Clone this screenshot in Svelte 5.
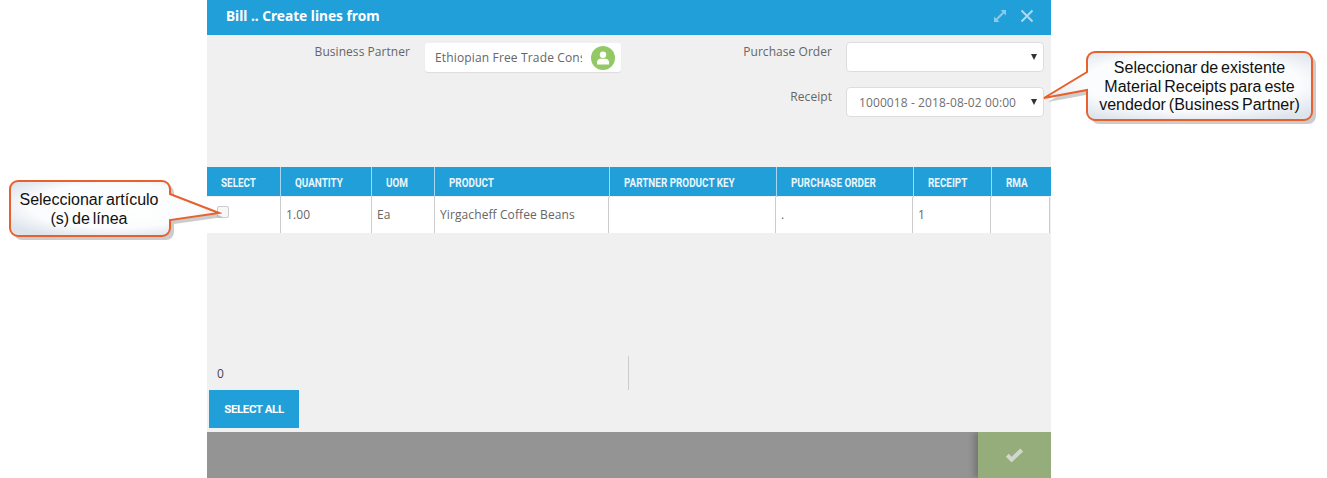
<script>
  const headers = [
    { label: 'SELECT' },
    { label: 'QUANTITY' },
    { label: 'UOM' },
    { label: 'PRODUCT' },
    { label: 'PARTNER PRODUCT KEY' },
    { label: 'PURCHASE ORDER' },
    { label: 'RECEIPT' },
    { label: 'RMA' }
  ];
  const row = ['1.00', 'Ea', 'Yirgacheff Coffee Beans', '', '.', '1', ''];
</script>

<div class="page">
  <div class="modal">
    <header class="title">
      <span class="title-text">Bill .. Create lines from</span>
      <span class="title-icons">
        <svg width="14" height="14" viewBox="0 0 14 14">
          <path d="M7.500 1H13v5.500zM1 7.500V13h5.500z" fill="#8ccaea"/>
          <path d="M3.500 10.500l7-7" stroke="#8ccaea" stroke-width="2" fill="none"/>
        </svg>
        <svg width="14" height="14" viewBox="0 0 14 14">
          <path d="M1.500 1.500l11 11M12.500 1.500l-11 11" stroke="#aed9f0" stroke-width="2" fill="none"/>
        </svg>
      </span>
    </header>

    <section class="form">
      <div class="form-left">
        <span class="label partner-label">Business Partner</span>
        <div class="partner">
          <span class="partner-text">Ethiopian Free Trade Consortium</span>
          <span class="partner-icon">
            <svg width="14" height="14" viewBox="0 0 14 14">
              <circle cx="7" cy="3.800" r="3.200" fill="#fff"/>
              <path d="M1 13.500v-2.500c0-2 1.600-3.300 3.500-3.300h5c1.900 0 3.500 1.300 3.500 3.300v2.500z" fill="#fff"/>
            </svg>
          </span>
        </div>
      </div>
      <div class="form-right">
        <span class="label">Purchase Order</span>
        <div class="select"><span></span><i class="caret"></i></div>
        <span class="label">Receipt</span>
        <div class="select"><span>1000018 - 2018-08-02 00:00</span><i class="caret"></i></div>
      </div>
    </section>

    <div class="thead">
      {#each headers as h}
        <div class="th"><span class="th-label">{h.label}</span></div>
      {/each}
    </div>
    <div class="tbody">
      <div class="td"><span class="check"></span></div>
      {#each row as cell}
        <div class="td">{cell}</div>
      {/each}
    </div>

    <div class="spacer"></div>

    <div class="status">
      <span class="count">0</span>
      <span class="divider"></span>
    </div>
    <button class="select-all">SELECT ALL</button>

    <footer class="footer">
      <div class="ok">
        <svg width="19" height="15" viewBox="2 0 16 13">
          <path d="M2.500 7.500l5 5 10-9.500-2.500-2.500-7.500 7-2.500-2.500z" fill="#d2d6ce"/>
        </svg>
      </div>
    </footer>
  </div>

  <div class="callout callout-left">
    <svg class="bubble" width="215" height="68" viewBox="0 0 215 68">
      <defs>
        <radialGradient id="fillLeft" cx="0.5" cy="0.45" r="0.62">
          <stop offset="0" stop-color="#ffffff"/>
          <stop offset="0.65" stop-color="#fbfcfd"/>
          <stop offset="1" stop-color="#dde4ec"/>
        </radialGradient>
      </defs>
      <path d="M11 2h144a8 8 0 0 1 8 8v5l49 19-49 7v8a8 8 0 0 1-8 8H11a8 8 0 0 1-8-8V10a8 8 0 0 1 8-8z" transform="translate(4 4)" fill="#9a9a9a" opacity="0.5"/>
      <path d="M11 2h144a8 8 0 0 1 8 8v5l49 19-49 7v8a8 8 0 0 1-8 8H11a8 8 0 0 1-8-8V10a8 8 0 0 1 8-8z" fill="url(#fillLeft)" stroke="#e8602c" stroke-width="2"/>
    </svg>
    <p class="callout-text left-text">Seleccionar artículo<br />(s) de línea</p>
  </div>

  <div class="callout callout-right">
    <svg class="bubble" width="280" height="80" viewBox="0 0 280 80">
      <defs>
        <radialGradient id="fillRight" cx="0.55" cy="0.45" r="0.62">
          <stop offset="0" stop-color="#ffffff"/>
          <stop offset="0.65" stop-color="#fbfcfd"/>
          <stop offset="1" stop-color="#dde4ec"/>
        </radialGradient>
      </defs>
      <path d="M54 2h209a8 8 0 0 1 8 8v52a8 8 0 0 1-8 8H54a8 8 0 0 1-8-8V40l-43 8 43-26V10a8 8 0 0 1 8-8z" transform="translate(4 4)" fill="#9a9a9a" opacity="0.5"/>
      <path d="M54 2h209a8 8 0 0 1 8 8v52a8 8 0 0 1-8 8H54a8 8 0 0 1-8-8V40l-43 8 43-26V10a8 8 0 0 1 8-8z" fill="url(#fillRight)" stroke="#e8602c" stroke-width="2"/>
    </svg>
    <p class="callout-text right-text">Seleccionar de existente<br />Material Receipts para este<br />vendedor (Business Partner)</p>
  </div>
</div>

<style>
  :global(body) {
    margin: 0;
    background: #fff;
  }

  .page {
    position: relative;
    width: 1327px;
    height: 478px;
    overflow: hidden;
    font-family: "Open Sans", sans-serif;
  }

  .modal {
    margin-left: 207px;
    width: 844px;
    height: 478px;
    display: flex;
    flex-direction: column;
    background: #f0f0f0;
  }

  .title {
    flex: none;
    height: 35px;
    padding: 0 17px 0 19px;
    display: flex;
    align-items: center;
    justify-content: space-between;
    background: #219fd9;
    color: #fff;
  }

  .title-text {
    font-family: "Noto Sans", sans-serif;
    font-size: 13.700px;
    font-weight: 700;
    margin-top: -4px;
  }

  .title-icons {
    display: flex;
    gap: 13px;
    align-items: center;
    margin-top: -3px;
  }

  .form {
    flex: none;
    height: 132px;
    display: flex;
  }

  .form-left {
    width: 414px;
    padding-top: 8px;
    display: flex;
    justify-content: flex-end;
    gap: 15px;
    box-sizing: border-box;
  }

  .label {
    font-size: 12px;
    letter-spacing: 0.05px;
    color: #666;
    line-height: 16px;
    text-align: right;
    margin-top: 1px;
  }

  .form-right .label {
    margin-top: 1px;
    padding-top: 1px;
  }

  .partner {
    width: 196px;
    height: 29px;
    box-sizing: border-box;
    display: flex;
    align-items: center;
    justify-content: space-between;
    padding: 0 6px 0 10px;
    background: #fff;
    border-radius: 3px;
    box-shadow: 0 1px 1px #ddd;
  }

  .partner-text {
    width: 147px;
    overflow: hidden;
    white-space: nowrap;
    font-size: 12px;
    letter-spacing: 0.15px;
    color: #666;
  }

  .partner-icon {
    width: 24px;
    height: 24px;
    border-radius: 50%;
    background: #92c964;
    display: flex;
    align-items: center;
    justify-content: center;
  }

  .form-right {
    margin-left: 110px;
    padding-top: 7px;
    display: grid;
    grid-template-columns: 101px 198px;
    grid-auto-rows: 30px;
    row-gap: 15px;
    column-gap: 14px;
    align-content: start;
  }

  .select {
    box-sizing: border-box;
    height: 30px;
    display: flex;
    align-items: center;
    justify-content: space-between;
    padding: 0 6px 0 12px;
    background: #fff;
    border: 1px solid #ddd;
    border-radius: 4px;
    font-size: 12px;
    letter-spacing: 0.1px;
    color: #707070;
  }

  .caret {
    width: 0;
    height: 0;
    border-left: 3px solid transparent;
    border-right: 3px solid transparent;
    border-top: 6px solid #333;
  }

  .thead {
    flex: none;
    height: 29px;
    display: grid;
    grid-template-columns: 74px 91px 63px 175px 167px 137px 78px 59px;
    background: #219fd9;
  }

  .th {
    box-sizing: border-box;
    padding-left: 14px;
    border-right: 1px solid #a8d7ef;
    font-family: Roboto, sans-serif;
    font-size: 12.500px;
    font-weight: 700;
    line-height: 31px;
    color: #e9f5fb;
    white-space: nowrap;
  }

  .th:last-child {
    border-right: none;
  }

  /* the original face is condensed, none is installed */
  .th-label {
    display: inline-block;
    transform: scaleX(0.79);
    transform-origin: left center;
  }

  .tbody {
    flex: none;
    margin-top: 1px;
    height: 36px;
    width: 843px;
    display: grid;
    grid-template-columns: 74px 91px 63px 174px 167px 137px 78px 59px;
    background: #fff;
  }

  .td {
    box-sizing: border-box;
    padding-left: 5px;
    border-right: 1px solid #ccc;
    font-size: 12px;
    letter-spacing: 0.1px;
    line-height: 36px;
    color: #666;
  }

  .check {
    display: block;
    width: 12px;
    height: 12px;
    margin: 9px 0 0 5px;
    box-sizing: border-box;
    border: 1px solid #ccc;
    border-radius: 2px;
    background: #f7f7f7;
  }

  .spacer {
    flex: 1;
  }

  .status {
    flex: none;
    height: 34px;
    display: flex;
    align-items: center;
  }

  .count {
    width: 421px;
    padding-left: 10px;
    box-sizing: border-box;
    font-size: 12px;
    color: #444;
    margin-top: 1px;
  }

  .divider {
    width: 1px;
    height: 34px;
    background: #ccc;
  }

  .select-all {
    flex: none;
    width: 90px;
    height: 38px;
    margin: 0 0 4px 2px;
    padding: 0;
    border: none;
    background: #219fd9;
    color: #fff;
    font-family: Roboto, sans-serif;
    font-size: 11.500px;
    font-weight: 700;
    letter-spacing: -0.4px;
  }

  .footer {
    flex: none;
    height: 46px;
    display: flex;
    justify-content: flex-end;
    overflow: hidden;
    background: #949494;
  }

  .ok {
    width: 73px;
    display: flex;
    align-items: center;
    justify-content: center;
    background: #94ad7b;
    box-shadow: -4px 0 6px rgba(60, 60, 60, 0.35);
  }

  .callout {
    position: absolute;
  }

  .bubble {
    display: block;
  }

  .callout-left {
    left: 7px;
    top: 179px;
    width: 215px;
    height: 68px;
  }

  .callout-right {
    left: 1041px;
    top: 50px;
    width: 280px;
    height: 80px;
  }

  .callout-text {
    position: absolute;
    margin: 0;
    font-family: "Liberation Sans", Arial, sans-serif;
    font-size: 16px;
    word-spacing: -1.500px;
    line-height: 18.500px;
    color: #111;
    text-align: center;
    white-space: nowrap;
  }

  .left-text {
    left: 2px;
    width: 160px;
    top: 12px;
  }

  .right-text {
    left: 46px;
    width: 225px;
    top: 9px;
  }
</style>
